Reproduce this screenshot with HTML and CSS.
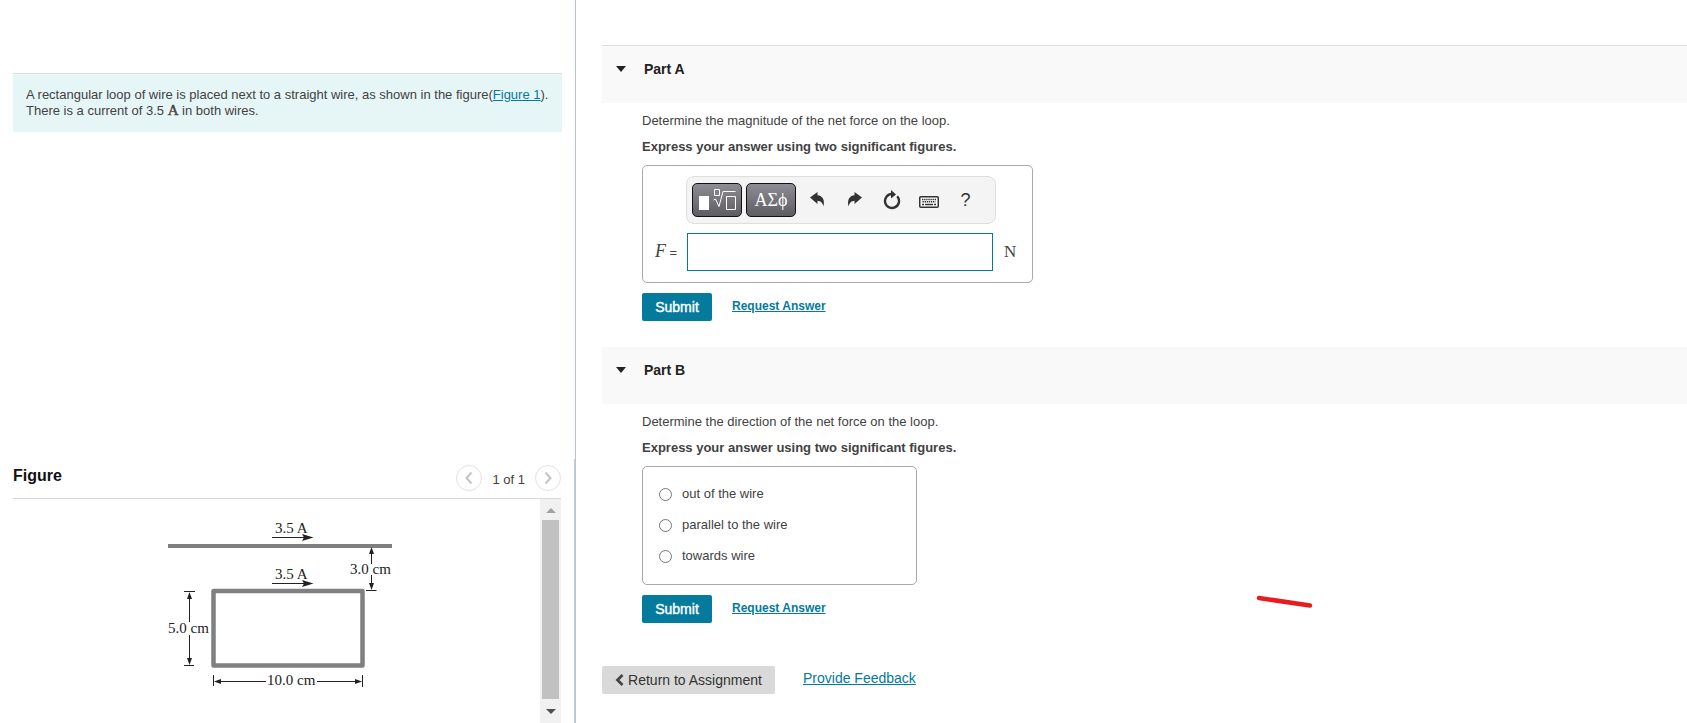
FILE: index.html
```html
<!DOCTYPE html>
<html lang="en">
<head>
<meta charset="utf-8">
<meta name="viewport" content="width=device-width, initial-scale=1">
<title>Force on a rectangular loop</title>
<link rel="stylesheet" href="styles.css">
</head>
<body>
<div class="page">
  <aside class="side">
    <p class="problem">A rectangular loop of wire is placed next to a straight wire, as shown in the figure(<a href="#figure">Figure 1</a>). There is a current of 3.5 <span class="unit">A</span> in both wires.</p>
    <section class="figure" id="figure">
      <header class="figure-head">
        <h2>Figure</h2>
        <nav class="pager">
          <button type="button" aria-label="Previous figure"><svg width="10" height="14" viewBox="0 0 10 14"><path d="M7.500 1.500 2.500 7l5 5.500"/></svg></button>
          <span class="count">1 of 1</span>
          <button type="button" aria-label="Next figure"><svg width="10" height="14" viewBox="0 0 10 14"><path d="M2.500 1.500 7.500 7l-5 5.500"/></svg></button>
        </nav>
      </header>
      <div class="figure-body">
        <div class="canvas">
          <svg class="diagram" width="226" height="174" viewBox="168 520 226 174" role="img" aria-label="Loop beside a straight wire">
            <g class="wire">
              <path d="M168 546H392" stroke-width="4"/>
              <rect x="213.500" y="591" width="149" height="74.500" stroke-width="4.500" stroke-linejoin="round"/>
            </g>
            <g class="dim">
              <path d="M272 537.500H306M272 583.500H306M371.500 552V564M371.500 575V584M366 590.500H376.500M189.500 597V622M189.500 635V660M184 591.500H195M184 665.500H194M220 681.500H266M317 681.500H357M213.500 675V686M362.500 675V687"/>
            </g>
            <g class="tip">
              <path d="M313.500 537.500 302 534l2 3.500-2 3.500zM313.500 583.500 302 580l2 3.500-2 3.500z"/>
              <path d="M371.500 547l-2.500 7h5zM371.500 590l-2.500-7h5zM189.500 592l-2.500 7h5zM189.500 665l-2.500-7h5zM214 681.500l7-2.500v5zM362 681.500l-7-2.500v5z"/>
            </g>
            <g class="tag">
              <text x="275" y="533">3.5 A</text>
              <text x="275" y="579">3.5 A</text>
              <text x="350" y="574">3.0 cm</text>
              <text x="168" y="633">5.0 cm</text>
              <text x="267" y="685">10.0 cm</text>
            </g>
          </svg>
        </div>
        <div class="scroll">
          <i class="up"></i><i class="thumb"></i><i class="down"></i>
        </div>
      </div>
    </section>
  </aside>

  <main class="main">
    <section>
      <header class="part-head ruled"><i class="caret"></i><h2>Part A</h2></header>
      <div class="part-body">
        <p>Determine the magnitude of the net force on the loop.</p>
        <p class="strong">Express your answer using two significant figures.</p>
        <div class="answer">
          <div class="tools">
            <button type="button" class="key" aria-label="Templates">
              <svg width="38" height="24" viewBox="0 0 38 24"><path d="M1 8h10v14H1z" fill="#fff"/><path d="M16.500 1.500h5v6h-5zM15.500 12l2-1 3.500 7.500L25 3.500H37.500M28.500 8.500h9v13h-9z" fill="none" stroke="#fff"/></svg>
            </button>
            <button type="button" class="key greek">ΑΣϕ</button>
            <button type="button" class="tool" aria-label="Undo"><svg width="16" height="16" viewBox="0 0 16 16"><path d="M0 5.500 7.500 0v3.300c5 .4 7.500 4.200 6 11.200C12.500 10.500 10.500 9 7.500 8.800V12z"/></svg></button>
            <button type="button" class="tool" aria-label="Redo"><svg width="16" height="16" viewBox="0 0 16 16"><path d="M15 5.500 7.500 0v3.300c-5 .4-7.500 4.200-6 11.200C2.500 10.500 4.500 9 7.500 8.800V12z"/></svg></button>
            <button type="button" class="tool" aria-label="Reset"><svg width="18" height="20" viewBox="0 0 18 20"><path d="M9 4A7 7 0 1 0 14.200 6.300" fill="none" stroke="#333" stroke-width="2.400"/><path d="M8 0 13 4.500 8 8.500z"/></svg></button>
            <button type="button" class="tool" aria-label="Keyboard shortcuts"><svg width="20" height="16" viewBox="0 -4 20 16"><rect x=".75" y=".75" width="18.500" height="10.500" rx="1" fill="#fff" stroke="#333" stroke-width="1.500"/><path d="M3 3.500h14M3.500 5.700h13" stroke="#333" stroke-width="1.500" stroke-dasharray="1.400 .7"/><path d="M3 8.500h2M6 8.500h8M15 8.500h2" stroke="#333" stroke-width="1.500"/></svg></button>
            <button type="button" class="tool help" aria-label="Help">?</button>
          </div>
          <div class="entry">
            <label for="force"><i>F</i> =</label>
            <input id="force" type="text">
            <span class="newton">N</span>
          </div>
        </div>
        <div class="actions">
          <button type="button" class="submit">Submit</button>
          <a href="#request-a">Request Answer</a>
        </div>
      </div>
    </section>

    <section>
      <header class="part-head"><i class="caret"></i><h2>Part B</h2></header>
      <div class="part-body">
        <p>Determine the direction of the net force on the loop.</p>
        <p class="strong">Express your answer using two significant figures.</p>
        <div class="choices">
          <label><input type="radio" name="direction">out of the wire</label>
          <label><input type="radio" name="direction">parallel to the wire</label>
          <label><input type="radio" name="direction">towards wire</label>
        </div>
        <div class="actions">
          <button type="button" class="submit">Submit</button>
          <a href="#request-b">Request Answer</a>
        </div>
      </div>
    </section>

    <footer class="foot">
      <button type="button" class="return"><svg width="9" height="12" viewBox="0 0 9 12"><path d="M7.500 1 2.500 6l5 5" fill="none" stroke="#444" stroke-width="2.800"/></svg>Return to Assignment</button>
      <a href="#feedback">Provide Feedback</a>
    </footer>
    <svg class="mark" width="60" height="14" viewBox="0 0 60 14"><path d="M3 3 54 10.500" stroke="#e81c1c" stroke-width="4.500" stroke-linecap="round"/></svg>
  </main>
</div>
</body>
</html>
```
FILE: styles.css
```css
* { box-sizing: border-box; }
body {
  margin: 0;
  background: #fff;
  color: #424242;
  font: 13px/16px "Liberation Sans", Arial, sans-serif;
}
h2, p { margin: 0; }
button { font-family: inherit; cursor: pointer; }
a { color: #047a9c; }

.page {
  display: grid;
  grid-template-columns: 576px minmax(0, 1fr);
  height: 100vh;
  overflow: hidden;
}

/* Problem and figure column */
.side {
  display: flex;
  flex-direction: column;
  justify-content: space-between;
  padding-top: 73px;
  border-right: 1px solid #b4c4dc;
}
.problem {
  margin: 0 13px;
  padding: 13px 12px 13px 13px;
  min-height: 59px;
  border-top: 1px solid #d9dddd;
  background: #e6f6f7;
}
.unit { font: 15px/15px "Liberation Serif", serif; -webkit-text-stroke: 0.4px; }
.figure {
  padding: 0 13px;
  border-right: 1px solid #c6d0df;
}
.figure-head {
  display: flex;
  justify-content: space-between;
  height: 40px;
  border-bottom: 1px solid #d9d9d9;
}
.figure-head h2 { padding-top: 7px; color: #111; font-size: 16px; line-height: 20px; }
.pager { display: flex; align-items: flex-start; gap: 10px; padding-top: 6px; }
.pager button {
  display: grid;
  place-items: center;
  width: 26px;
  height: 26px;
  padding: 0;
  border: 1px solid #e2e2e2;
  border-radius: 50%;
  background: #fff;
}
.pager path { fill: none; stroke: #c4c4c4; stroke-width: 2; }
.count { padding-top: 7px; }
.figure-body { display: flex; height: 224px; }
.canvas { flex: 1; padding: 21px 0 0 155px; }
.diagram { display: block; }
.wire { fill: none; stroke: #808083; }
.dim { fill: none; stroke: #222; }
.tip { fill: #222; }
.tag { fill: #222; font: 15px "Liberation Serif", serif; }
.scroll {
  display: flex;
  flex-direction: column;
  align-items: center;
  width: 21px;
  background: #f1f1f1;
}
.thumb { flex: 1; width: 17px; background: #c1c1c1; }
.up, .down { width: 0; border: solid transparent; }
.up { margin: 9px 0 7px; border-width: 0 5px 5px; border-bottom-color: #a3a3a3; }
.down { margin: 10px 0 9px; border-width: 5px 5px 0; border-top-color: #505050; }

/* Parts column */
.main { position: relative; padding: 45px 0 0 26px; }
.part-head {
  display: flex;
  align-items: flex-start;
  gap: 18px;
  height: 57px;
  padding: 15px 14px;
  background: #f9f9f9;
}
.ruled { height: 58px; border-top: 1px solid #dcdcdc; }
.part-head h2 { color: #222; font-size: 14px; }
.caret {
  width: 0;
  margin-top: 5px;
  border: solid transparent;
  border-width: 6px 5px 0;
  border-top-color: #222;
}
.part-body { padding: 10px 40px 26px; }
.part-body p { padding-bottom: 10px; }
.strong { font-weight: bold; }
.answer {
  width: 391px;
  height: 118px;
  padding: 10px 12px;
  border: 1px solid #a9a9a9;
  border-radius: 5px;
}
.tools {
  display: flex;
  align-items: center;
  width: 310px;
  height: 48px;
  margin-left: 31px;
  padding-left: 5px;
  border: 1px solid #dedede;
  border-radius: 8px;
  background: #f4f4f4;
}
.key {
  display: grid;
  place-items: center;
  width: 50px;
  height: 34px;
  margin-right: 4px;
  padding: 0;
  border: 1px solid #111;
  border-radius: 5px;
  background: linear-gradient(#8e8c94, #5e5d61);
  color: #fff;
}
.greek { margin-right: 3px; font: 18px "Liberation Serif", serif; }
.tool {
  display: grid;
  place-items: center;
  width: 37px;
  height: 34px;
  padding: 0;
  border: 0;
  background: none;
  fill: #333;
  color: #333;
}
.help { font-size: 18px; }
.entry { display: flex; align-items: center; margin-top: 9px; }
.entry label { width: 32px; font-size: 13px; }
.entry i { font: italic 18px/16px "Liberation Serif", serif; }
.entry input {
  width: 306px;
  height: 38px;
  padding: 0 6px;
  border: 1px solid #047a9c;
  font: inherit;
}
.newton { margin-left: 11px; font: 17px/20px "Liberation Serif", serif; }
.actions { display: flex; gap: 20px; margin-top: 10px; }
.submit {
  width: 70px;
  height: 28px;
  padding: 0;
  border: 0;
  border-radius: 2px;
  background: #047a9c;
  color: #fff;
  font-size: 14px;
  -webkit-text-stroke: 0.4px;
}
.actions a { padding-top: 5px; font-size: 12px; font-weight: bold; }
.choices {
  display: flex;
  flex-direction: column;
  gap: 15px;
  width: 275px;
  height: 119px;
  padding: 19px 16px;
  border: 1px solid #a9a9a9;
  border-radius: 5px;
}
.choices label { display: flex; align-items: center; gap: 10px; }
.choices input { width: 13px; height: 13px; margin: 0; }
.foot { display: flex; gap: 28px; padding-top: 17px; }
.return {
  display: flex;
  align-items: center;
  justify-content: center;
  gap: 4px;
  width: 173px;
  height: 28px;
  padding: 0;
  border: 0;
  border-radius: 2px;
  background: #d9d9d9;
  color: #333;
  font-size: 14px;
}
.foot a { padding-top: 4px; font-size: 14px; }

/* Free pen stroke over the page */
.mark { position: absolute; left: 680px; top: 595px; }
```
